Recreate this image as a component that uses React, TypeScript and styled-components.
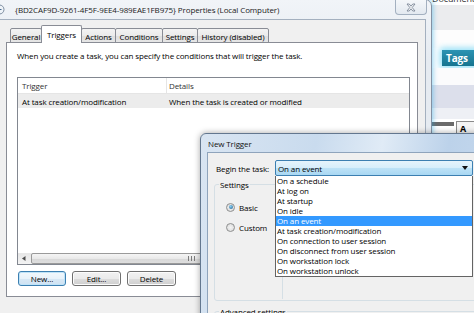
import styled, { createGlobalStyle } from "styled-components"

const GlobalStyle = createGlobalStyle`
  body {
    margin: 0;
    font-family: "Open Sans", "Noto Sans", sans-serif;
    font-size: 8px;
    letter-spacing: -0.12px;
    color: #000;
  }
`

const Desktop = styled.div`
  position: relative;
  width: 474px;
  height: 313px;
  overflow: hidden;
  background: #f0f0f0;
`

/* window behind, on the right */
const BackWindow = styled.div`
  position: absolute;
  left: 430px;
  top: 0;
  width: 60px;
  height: 160px;
  background: #fff;
  display: flex;
  flex-direction: column;
`

const TopStrip = styled.div`
  height: 5px;
  overflow: hidden;
  display: flex;
  align-items: flex-end;
  padding-left: 2px;
  span {
    font-size: 9px;
    line-height: 12px;
    color: #333;
  }
`

const Band = styled.div<{ $h: number; $bg: string }>`
  height: ${(p) => p.$h}px;
  flex-shrink: 0;
  background: ${(p) => p.$bg};
`

const TagsRow = styled.div`
  height: 20px;
  flex-shrink: 0;
  padding-left: 12px;
  display: flex;
  align-items: center;
`

const TagsButton = styled.div`
  height: 16px;
  flex: 1;
  background: linear-gradient(#2b93b3, #16748f);
  box-shadow: 0 0 6px 2px rgba(70, 200, 240, 0.6);
  color: #fff;
  font-weight: 700;
  font-size: 10px;
  line-height: 16px;
  padding-left: 4px;
`

const ToolRow = styled.div`
  display: flex;
  align-items: flex-start;
  padding-top: 2px;
`

const DarkBar = styled.div`
  width: 24px;
  height: 4px;
  background: #6a6a6a;
  margin-top: 1px;
`

const SmallBtn = styled.div`
  margin-left: 2px;
  width: 20px;
  height: 15px;
  border: 1px solid #8a8a8a;
  background: #f4f4f4;
  font-weight: 700;
  font-size: 9px;
  padding-left: 3px;
  line-height: 14px;
`

/* Properties window */
const MainWindow = styled.div`
  position: absolute;
  left: -10px;
  top: -1px;
  width: 442px;
  height: 340px;
  box-sizing: border-box;
  border: 1px solid #8391a3;
  border-radius: 7px 7px 0 0;
  background: linear-gradient(#f1f4f8, #e6ebf1 60px, #e6ebf1);
  box-shadow: 0 0 5px 1px rgba(40, 170, 230, 0.5);
  display: flex;
  flex-direction: column;
`

const TitleBar = styled.div`
  height: 19px;
  flex-shrink: 0;
  display: flex;
  align-items: center;
  padding-left: 3px;
`

const TitleText = styled.div`
  margin-left: 10px;
  color: #1b1b1b;
  white-space: nowrap;
`

const CloseBtn = styled.div`
  margin-left: auto;
  margin-right: 4px;
  align-self: flex-start;
  width: 32px;
  height: 15px;
  box-sizing: border-box;
  border: 1px solid #a3b0c0;
  border-top: none;
  border-radius: 0 0 4px 4px;
  background: linear-gradient(#f4f7fa, #e3e9f0);
  display: flex;
  align-items: center;
  justify-content: center;
`

const Client = styled.div`
  flex: 1;
  margin: 0 5px;
  border: 1px solid #a4b0bf;
  background: #f0f0f0;
  padding: 5px 7px 0 9px;
`

const TabStrip = styled.div`
  height: 18px;
  display: flex;
  align-items: flex-end;
  padding-left: 4px;
  margin-bottom: -1px;
  position: relative;
  z-index: 1;
`

const Tab = styled.div<{ $w: number; $active?: boolean }>`
  width: ${(p) => p.$w}px;
  height: ${(p) => (p.$active ? 18 : 15)}px;
  box-sizing: border-box;
  margin-left: -1px;
  border: 1px solid #898c95;
  border-bottom: ${(p) => (p.$active ? "none" : "1px solid #898c95")};
  border-radius: 2px 2px 0 0;
  background: ${(p) =>
    p.$active ? "#fff" : "linear-gradient(#f3f3f3, #ebebeb 50%, #dedede 51%, #e6e6e6)"};
  display: flex;
  align-items: center;
  justify-content: center;
  padding-top: ${(p) => (p.$active ? 0 : 1)}px;
  position: relative;
  z-index: ${(p) => (p.$active ? 2 : 1)};
  white-space: nowrap;
  &:first-child {
    margin-left: 0;
  }
`

const Panel = styled.div`
  height: 255px;
  box-sizing: border-box;
  background: #fff;
  border: 1px solid #898c95;
  padding: 6px 7px 10px 10px;
  display: flex;
  flex-direction: column;
`

const Description = styled.div`
  line-height: 13px;
  height: 13px;
  white-space: nowrap;
`

const ListView = styled.div`
  margin-top: 15px;
  height: 188px;
  box-sizing: border-box;
  border: 1px solid #828790;
  display: flex;
  flex-direction: column;
`

const ListRow = styled.div<{ $header?: boolean }>`
  height: ${(p) => (p.$header ? 16 : 14)}px;
  flex-shrink: 0;
  display: flex;
  background: ${(p) => (p.$header ? "#fff" : "#ececec")};
  border-bottom: ${(p) => (p.$header ? "1px solid #e5e5e5" : "none")};
  box-sizing: border-box;
`

const Cell = styled.div<{ $w?: number; $header?: boolean }>`
  width: ${(p) => (p.$w ? `${p.$w}px` : "auto")};
  flex: ${(p) => (p.$w ? "0 0 auto" : "1")};
  box-sizing: border-box;
  padding-left: ${(p) => (p.$w ? 4 : 2)}px;
  border-right: ${(p) => (p.$header && p.$w ? "1px solid #e5e5e5" : "none")};
  display: flex;
  align-items: center;
  white-space: nowrap;
  color: ${(p) => (p.$header ? "#333" : "#000")};
`

const ListFill = styled.div`
  flex: 1;
`

const HScroll = styled.div`
  height: 11px;
  flex-shrink: 0;
  display: flex;
  align-items: stretch;
  background: linear-gradient(#e6e6e6, #f3f3f3);
`

const ScrollArrow = styled.div`
  width: 11px;
  display: flex;
  align-items: center;
  justify-content: center;
`

const ScrollThumb = styled.div`
  margin-left: 2px;
  width: 320px;
  box-sizing: border-box;
  border: 1px solid #9a9a9a;
  border-radius: 2px;
  background: linear-gradient(#f5f5f5, #e9e9e9 50%, #d8d8d8 51%, #dedede);
  display: flex;
  align-items: center;
  justify-content: center;
`

const ButtonRow = styled.div`
  margin-top: 6px;
  margin-left: 1px;
  display: flex;
  gap: 6px;
`

const WinButton = styled.div<{ $w: number; $default?: boolean }>`
  width: ${(p) => p.$w}px;
  height: 15px;
  box-sizing: border-box;
  border: 1px solid ${(p) => (p.$default ? "#3c7fb1" : "#707070")};
  border-radius: 3px;
  background: ${(p) =>
    p.$default
      ? "linear-gradient(#f2f8fc, #e8f2fa 50%, #d7e8f5 51%, #cfe2f2)"
      : "linear-gradient(#f2f2f2, #ebebeb 50%, #dddddd 51%, #cfcfcf)"};
  box-shadow: ${(p) => (p.$default ? "inset 0 0 0 1px #bfe3f8" : "inset 0 0 0 1px #fcfcfc")};
  display: flex;
  align-items: center;
  justify-content: center;
  line-height: 12px;
`

/* New Trigger dialog */
const Dialog = styled.div`
  position: absolute;
  left: 200px;
  top: 133px;
  width: 300px;
  height: 200px;
  box-sizing: border-box;
  border: 1px solid #63778f;
  border-radius: 6px 6px 0 0;
  background: linear-gradient(100deg, #d9e5f2 0%, #c9dbee 35%, #e0ebf6 55%, #bcd2ea 75%, #c8daee 100%);
  box-shadow: 0 0 6px rgba(0, 0, 0, 0.35);
  display: flex;
  flex-direction: column;
  z-index: 5;
`

const DialogTitle = styled.div`
  height: 18px;
  flex-shrink: 0;
  display: flex;
  align-items: center;
  padding-left: 7px;
  color: #111;
`

const DialogClient = styled.div`
  flex: 1;
  margin-left: 6px;
  border: 1px solid #8fa4bc;
  border-right: none;
  background: #f0f0f0;
  padding: 7px 0 0 8px;
`

const BeginRow = styled.div`
  display: flex;
  align-items: center;
  height: 16px;
`

const FieldLabel = styled.div`
  width: 59px;
  white-space: nowrap;
`

const ComboWrap = styled.div`
  position: relative;
`

const Combo = styled.div`
  width: 198px;
  height: 16px;
  box-sizing: border-box;
  border: 1px solid #3c7fb1;
  border-radius: 2px;
  background: linear-gradient(#e6f4fc, #d6eefb 50%, #bde2f7 51%, #a9d8f3);
  display: flex;
  align-items: center;
  padding: 0 4px 0 2px;
  span {
    flex: 1;
  }
`

const DropList = styled.div`
  position: absolute;
  left: 0;
  top: 100%;
  width: 198px;
  box-sizing: border-box;
  background: #fff;
  border: 1px solid #646464;
  border-top: none;
  z-index: 10;
`

const DropItem = styled.div<{ $selected?: boolean }>`
  height: 10px;
  line-height: 10px;
  padding-left: 1px;
  white-space: nowrap;
  background: ${(p) => (p.$selected ? "#3399ff" : "transparent")};
  color: ${(p) => (p.$selected ? "#fff" : "#000")};
`

const GroupBox = styled.div<{ $h: number; $mt: number }>`
  margin: ${(p) => p.$mt}px 0 0 -2px;
  height: ${(p) => p.$h}px;
  box-sizing: border-box;
  border: 1px solid #d5dfe5;
  border-radius: 3px;
  display: flex;
  flex-direction: column;
`

const Legend = styled.div`
  margin: -6px 0 0 4px;
  padding: 0 1px;
  width: fit-content;
  background: #f0f0f0;
  line-height: 11px;
  white-space: nowrap;
`

const GroupBody = styled.div`
  flex: 1;
  display: flex;
`

const RadioColumn = styled.div`
  width: 67px;
  padding: 11px 0 0 11px;
  box-sizing: border-box;
  display: flex;
  flex-direction: column;
  gap: 8px;
`

const RadioRow = styled.div`
  display: flex;
  align-items: center;
  height: 12px;
  gap: 4px;
`

const RadioDot = styled.div<{ $checked?: boolean }>`
  width: 9px;
  height: 9px;
  box-sizing: border-box;
  border-radius: 50%;
  border: 1px solid #8e8f8f;
  background: radial-gradient(circle, #f4f4f4 0%, #d8d8d8 100%);
  display: flex;
  align-items: center;
  justify-content: center;
  &::after {
    content: "";
    display: ${(p) => (p.$checked ? "block" : "none")};
    width: 4px;
    height: 4px;
    border-radius: 50%;
    background: radial-gradient(circle at 40% 35%, #8ad0f5, #1c5c8a);
  }
`

const SubArea = styled.div`
  flex: 1;
  margin: 4px 0 1px 0;
  border-left: 1px solid #d5dfe5;
`

const triggers = [
  "On a schedule",
  "At log on",
  "At startup",
  "On idle",
  "On an event",
  "At task creation/modification",
  "On connection to user session",
  "On disconnect from user session",
  "On workstation lock",
  "On workstation unlock",
]

const tabs = [
  { label: "General", w: 32 },
  { label: "Triggers", w: 41, active: true },
  { label: "Actions", w: 35 },
  { label: "Conditions", w: 48 },
  { label: "Settings", w: 36 },
  { label: "History (disabled)", w: 72 },
]

function TaskIcon() {
  return (
    <svg width="11" height="11" viewBox="0 0 11 11">
      <circle cx="5.5" cy="5.5" r="4.5" fill="#eef3f8" stroke="#7d8da0" />
      <path d="M5.5 2.5v3h2" fill="none" stroke="#4a6a90" strokeWidth="1" />
    </svg>
  )
}

function CloseGlyph() {
  return (
    <svg width="10" height="9" viewBox="0 0 10 9">
      <path
        d="M1 1h2.2L5 3.2 6.8 1H9L6.2 4.5 9 8H6.8L5 5.8 3.2 8H1l2.8-3.5z"
        fill="#f7f9fb"
        stroke="#7c8796"
        strokeWidth="0.9"
        strokeLinejoin="round"
      />
    </svg>
  )
}

function LeftArrow() {
  return (
    <svg width="4" height="5" viewBox="0 0 4 5">
      <path d="M3.5 0v5L0 2.5z" fill="#4d4d4d" />
    </svg>
  )
}

function Grip() {
  return (
    <svg width="7" height="5" viewBox="0 0 7 5">
      <path d="M0.5 0v5M3.5 0v5M6.5 0v5" stroke="#7a7a7a" strokeWidth="1" />
    </svg>
  )
}

function DropArrow() {
  return (
    <svg width="6" height="4" viewBox="0 0 6 4">
      <path d="M0 0h6L3 4z" fill="#111" />
    </svg>
  )
}

export default function App() {
  return (
    <>
      <GlobalStyle />
      <Desktop>
        <BackWindow>
          <TopStrip>
            <span>Documents</span>
          </TopStrip>
          <Band $h={25} $bg="#ebecee" />
          <Band $h={18} $bg="#fdfdfd" />
          <TagsRow>
            <TagsButton>Tags</TagsButton>
          </TagsRow>
          <Band $h={17} $bg="#fbfbfc" />
          <Band $h={23} $bg="#dcdfeb" />
          <Band $h={11} $bg="#eef0f5" />
          <ToolRow>
            <DarkBar />
            <SmallBtn>A</SmallBtn>
          </ToolRow>
        </BackWindow>

        <MainWindow>
          <TitleBar>
            <TaskIcon />
            <TitleText>{"{BD2CAF9D-9261-4F5F-9EE4-989EAE1FB975} Properties (Local Computer)"}</TitleText>
            <CloseBtn>
              <CloseGlyph />
            </CloseBtn>
          </TitleBar>
          <Client>
            <TabStrip>
              {tabs.map((t) => (
                <Tab key={t.label} $w={t.w} $active={t.active}>
                  {t.label}
                </Tab>
              ))}
            </TabStrip>
            <Panel>
              <Description>
                When you create a task, you can specify the conditions that will trigger the task.
              </Description>
              <ListView>
                <ListRow $header>
                  <Cell $w={149} $header>
                    Trigger
                  </Cell>
                  <Cell $header>Details</Cell>
                </ListRow>
                <ListRow>
                  <Cell $w={149}>At task creation/modification</Cell>
                  <Cell>When the task is created or modified</Cell>
                </ListRow>
                <ListFill />
                <HScroll>
                  <ScrollArrow>
                    <LeftArrow />
                  </ScrollArrow>
                  <ScrollThumb>
                    <Grip />
                  </ScrollThumb>
                </HScroll>
              </ListView>
              <ButtonRow>
                <WinButton $w={48} $default>
                  New...
                </WinButton>
                <WinButton $w={49}>Edit...</WinButton>
                <WinButton $w={49}>Delete</WinButton>
              </ButtonRow>
            </Panel>
          </Client>
        </MainWindow>

        <Dialog>
          <DialogTitle>New Trigger</DialogTitle>
          <DialogClient>
            <BeginRow>
              <FieldLabel>Begin the task:</FieldLabel>
              <ComboWrap>
                <Combo>
                  <span>On an event</span>
                  <DropArrow />
                </Combo>
                <DropList>
                  {triggers.map((t) => (
                    <DropItem key={t} $selected={t === "On an event"}>
                      {t}
                    </DropItem>
                  ))}
                </DropList>
              </ComboWrap>
            </BeginRow>
            <GroupBox $h={117} $mt={8}>
              <Legend>Settings</Legend>
              <GroupBody>
                <RadioColumn>
                  <RadioRow>
                    <RadioDot $checked />
                    Basic
                  </RadioRow>
                  <RadioRow>
                    <RadioDot />
                    Custom
                  </RadioRow>
                </RadioColumn>
                <SubArea />
              </GroupBody>
            </GroupBox>
            <GroupBox $h={40} $mt={10}>
              <Legend>Advanced settings</Legend>
            </GroupBox>
          </DialogClient>
        </Dialog>
      </Desktop>
    </>
  )
}
